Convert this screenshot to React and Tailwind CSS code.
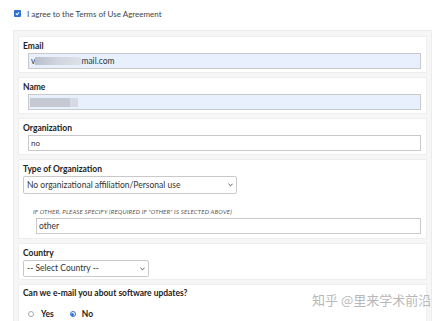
export default function App() {
  const label = "text-[8.5px] font-bold leading-[11px] text-[#222]";
  return (
    <div className="w-[444px] h-[321px] overflow-hidden bg-white relative text-[#222]" style={{ fontFamily: '"Lato", "Noto Sans", sans-serif' }}>
      <div className="flex items-center h-[27px] pl-[14px] gap-[6px]">
        <span className="w-[7px] h-[7px] rounded-[1px] bg-[#2f6fd6] flex items-center justify-center">
          <svg width="5" height="5" viewBox="0 0 6 6"><path d="M1 3 L2.5 4.5 L5 1.5" stroke="white" strokeWidth="1.3" fill="none" /></svg>
        </span>
        <span className="text-[8px] text-[#444]">I agree to the Terms of Use Agreement</span>
      </div>
      <div className="ml-[13px] w-[419px] mt-[3px] border border-[#ececec] bg-[#f6f6f6] px-[4px] pt-[5px] flex flex-col gap-[4px]">
        <div className="bg-white border border-[#eeeeee] px-[4px] pt-[4px] pb-[3px]">
          <div className={label}>Email</div>
          <div className="ml-[5px] mr-[1px] mt-[1px] h-[16px] bg-[#e8f0fe] border border-[#c9c9c9] flex items-center px-[2px] text-[8.5px] text-[#333]">
            v<span className="inline-block w-[46px] h-[8px] bg-gradient-to-r from-[#b9c0cc] via-[#d0d5de] to-[#dde2ea]"></span>mail.com
          </div>
        </div>
        <div className="bg-white border border-[#eeeeee] px-[4px] pt-[4px] pb-[3px]">
          <div className={label}>Name</div>
          <div className="ml-[5px] mr-[1px] mt-[1px] h-[16px] bg-[#e8f0fe] border border-[#c9c9c9] flex items-center px-[1px]">
            <span className="inline-block w-[40px] h-[9px] bg-[#c4c9d2]"></span>
            <span className="inline-block w-[8px] h-[9px] bg-[#d6dae2]"></span>
          </div>
        </div>
        <div className="bg-white border border-[#eeeeee] px-[4px] pt-[4px] pb-[3px]">
          <div className={label}>Organization</div>
          <div className="ml-[5px] mr-[1px] mt-[1px] h-[16px] bg-white border border-[#c9c9c9] flex items-center px-[2px] text-[8px] text-[#333]">no</div>
        </div>
        <div className="bg-white border border-[#eeeeee] px-[4px] pt-[4px] pb-[4px]">
          <div className={label}>Type of Organization</div>
          <div className="mt-[1px] w-[214px] h-[18px] bg-white border border-[#c9c9c9] rounded-[2px] flex items-center justify-between px-[3px] text-[8.5px] text-[#333]">
            <span>No organizational affiliation/Personal use</span>
            <svg width="5" height="4" viewBox="0 0 6 4"><path d="M0.5 0.5 L3 3 L5.5 0.5" stroke="#555" strokeWidth="1.2" fill="none" /></svg>
          </div>
          <div className="mt-[14px] ml-[10px] text-[6px] italic uppercase tracking-[0.2px] text-[#555] leading-[8px] whitespace-nowrap">If other, please specify (required if "other" is selected above)</div>
          <div className="ml-[13px] mr-[1px] mt-[2px] h-[16px] bg-white border border-[#c9c9c9] flex items-center px-[2px] text-[8.5px] text-[#333]">other</div>
        </div>
        <div className="bg-white border border-[#eeeeee] px-[4px] pt-[4px] pb-[2px]">
          <div className={label}>Country</div>
          <div className="mt-[1px] w-[126px] h-[17px] bg-white border border-[#c9c9c9] rounded-[2px] flex items-center justify-between px-[3px] text-[8.5px] text-[#333]">
            <span>-- Select Country --</span>
            <svg width="5" height="4" viewBox="0 0 6 4"><path d="M0.5 0.5 L3 3 L5.5 0.5" stroke="#555" strokeWidth="1.2" fill="none" /></svg>
          </div>
        </div>
        <div className="bg-white border border-[#eeeeee] px-[4px] pt-[3px] h-[60px]">
          <div className={label}>Can we e-mail you about software updates?</div>
          <div className="mt-[9px] ml-[5px] flex items-center text-[8.5px] font-bold">
            <span className="w-[6px] h-[6px] rounded-full border border-[#aaa]"></span>
            <span className="ml-[7px]">Yes</span>
            <span className="ml-[16px] w-[6px] h-[6px] rounded-full border border-[#2f6fd6] flex items-center justify-center">
              <span className="w-[3px] h-[3px] rounded-full bg-[#2f6fd6]"></span>
            </span>
            <span className="ml-[6px]">No</span>
          </div>
        </div>
      </div>
      <div className="absolute left-[312px] top-[291px] text-[13px] leading-[18px] whitespace-nowrap text-[#b8b8b8]" style={{ fontFamily: '"Noto Sans CJK SC", sans-serif' }}>知乎 @里来学术前沿</div>
    </div>
  );
}
